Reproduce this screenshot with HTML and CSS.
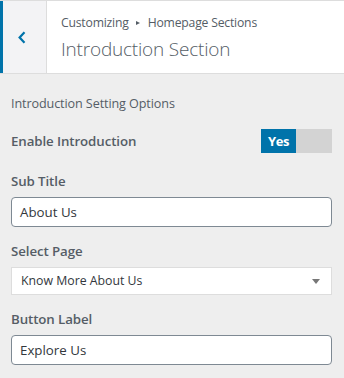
FILE: index.html
```html
<!DOCTYPE html>
<html>
<head>
<meta charset="utf-8">
<link rel="stylesheet" href="styles.css">
</head>
<body>
<div class="panel">
  <header class="head">
    <button class="back" aria-label="Back">
      <svg width="8" height="13" viewBox="0 0 8 13"><path d="M6.5 1.2 L1.6 6.5 L6.5 11.8" fill="none" stroke="#0073aa" stroke-width="2.2"/></svg>
    </button>
    <div class="titles">
      <div class="crumb">Customizing<span class="tri"></span>Homepage Sections</div>
      <div class="title">Introduction Section</div>
    </div>
  </header>
  <main class="body">
    <div class="desc">Introduction Setting Options</div>
    <div class="row">
      <span class="label">Enable Introduction</span>
      <span class="toggle"><span class="on">Yes</span><span class="off"></span></span>
    </div>
    <div class="field first">
      <span class="label">Sub Title</span>
      <div class="input">About Us</div>
    </div>
    <div class="field">
      <span class="label">Select Page</span>
      <div class="select"><span>Know More About Us</span><span class="arrow"></span></div>
    </div>
    <div class="field">
      <span class="label">Button Label</span>
      <div class="input">Explore Us</div>
    </div>
  </main>
</div>
</body>
</html>
```
FILE: styles.css
```css
* { box-sizing: border-box; }
html, body { margin: 0; padding: 0; }
body {
  background: #eeeeee;
  font-family: "Open Sans", "Noto Sans", sans-serif;
  color: #555d66;
  width: 344px;
  height: 378px;
  overflow: hidden;
}
.head {
  display: flex;
  height: 74px;
  background: #fff;
  border-top: 1px solid #dddddd;
  border-bottom: 1px solid #dddddd;
}
.back {
  width: 47px;
  flex: none;
  background: #f3f3f5;
  border: none;
  border-left: 3px solid #0073aa;
  border-right: 1px solid #dddddd;
  padding: 0 0 0 15px;
  margin: 0;
  display: flex;
  align-items: center;
  justify-content: flex-start;
}
.titles {
  padding: 13px 0 0 14px;
}
.crumb {
  font-size: 12.2px;
  line-height: 18px;
  color: #555d66;
  letter-spacing: -0.2px;
}
.tri {
  display: inline-block;
  width: 0;
  height: 0;
  border-left: 4px solid #555d66;
  border-top: 2.5px solid transparent;
  border-bottom: 2.5px solid transparent;
  margin: 0 8px 1px 7px;
  vertical-align: middle;
}
.title {
  font-size: 19px;
  font-weight: 300;
  line-height: 28px;
  margin-top: 3px;
  color: #555d66;
  letter-spacing: -0.2px;
}
.body {
  padding: 21px 12px 0 11px;
}
.desc {
  font-size: 12.6px;
  line-height: 18px;
  letter-spacing: -0.1px;
}
.row {
  display: flex;
  justify-content: space-between;
  align-items: center;
  margin-top: 16px;
  height: 24px;
}
.label {
  font-size: 13.3px;
  font-weight: 600;
  line-height: 18px;
  display: block;
  letter-spacing: -0.1px;
}
.toggle {
  display: flex;
  width: 71px;
  height: 24px;
}
.toggle .on {
  width: 35px;
  background: #0073aa;
  color: #fff;
  font-weight: 700;
  font-size: 13px;
  display: flex;
  align-items: center;
  justify-content: center;
  letter-spacing: -0.4px;
}
.toggle .off { flex: 1; background: #d3d3d3; }
.field { margin-top: 15px; }
.field.first { margin-top: 19px; }
.field .label { margin-bottom: 7px; }
.input {
  height: 30px;
  background: #fff;
  border: 1px solid #7e8993;
  border-radius: 4px;
  font-size: 13.3px;
  line-height: 28px;
  padding: 0 8px;
  color: #32373c;
}
.select {
  height: 28px;
  background: #fff;
  border: 1px solid #dddddd;
  font-size: 12.3px;
  line-height: 26px;
  padding: 0 8px 0 9px;
  color: #32373c;
  display: flex;
  justify-content: space-between;
  align-items: center;
}
.arrow {
  width: 0; height: 0;
  border-left: 4px solid transparent;
  border-right: 4px solid transparent;
  border-top: 5px solid #777;
  margin-right: 3px;
}
```
